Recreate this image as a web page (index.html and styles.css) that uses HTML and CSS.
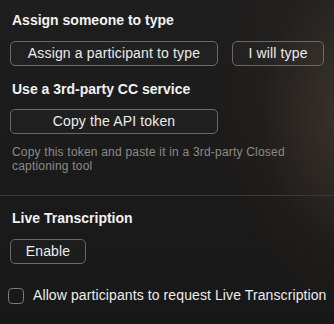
FILE: index.html
```html
<!DOCTYPE html>
<html>
<head>
<meta charset="utf-8">
<link rel="stylesheet" href="styles.css">
</head>
<body>
<div class="panel">
  <section class="sect">
    <h2 class="heading h-first">Assign someone to type</h2>
    <div class="btn-row">
      <button class="btn btn-wide">Assign a participant to type</button>
      <button class="btn btn-self">I will type</button>
    </div>
    <h2 class="heading h-second">Use a 3rd-party CC service</h2>
    <button class="btn btn-wide btn-block">Copy the API token</button>
    <p class="desc">Copy this token and paste it in a 3rd-party Closed captioning tool</p>
  </section>
  <div class="separator"></div>
  <section class="sect">
    <h2 class="heading h-third">Live Transcription</h2>
    <button class="btn btn-enable btn-block">Enable</button>
    <label class="check-row">
      <span class="checkbox"></span>
      <span class="check-label">Allow participants to request Live Transcription</span>
    </label>
  </section>
</div>
</body>
</html>
```
FILE: styles.css
```css
html, body {
  margin: 0;
  padding: 0;
}
body {
  width: 334px;
  height: 324px;
  overflow: hidden;
  background-color: #1b1a1a;
  background-image:
    radial-gradient(ellipse 150px 200px at 110% 35%, rgba(95, 78, 60, 0.55), rgba(60, 50, 40, 0.15) 70%, rgba(0, 0, 0, 0) 100%),
    linear-gradient(180deg, #1f1e1e 0%, #1b1a1a 60%, #181818 100%);
  font-family: "Liberation Sans", Arial, sans-serif;
  color: #ececec;
}
.panel {
  display: flex;
  flex-direction: column;
}
.sect {
  display: flex;
  flex-direction: column;
  align-items: flex-start;
  padding: 0 10px;
}
.heading {
  margin: 0 0 0 2px;
  font-size: 14px;
  line-height: 17px;
  font-weight: bold;
  color: #f2f2f2;
  white-space: nowrap;
}
.h-first { margin-top: 12px; margin-bottom: 12px; }
.h-second { margin-top: 15px; margin-bottom: 11px; }
.h-third { margin-top: 14px; margin-bottom: 12px; }
.btn-row {
  display: flex;
  gap: 14px;
}
.btn {
  box-sizing: border-box;
  flex-shrink: 0;
  height: 25px;
  padding: 0;
  border: 1px solid #6a6968;
  border-radius: 5px;
  background: rgba(255, 255, 255, 0.02);
  color: #ececec;
  font-family: "Liberation Sans", Arial, sans-serif;
  font-size: 14px;
  line-height: 17px;
  letter-spacing: 0.15px;
  white-space: nowrap;
  display: flex;
  align-items: center;
  justify-content: center;
}
.btn-wide { width: 208px; }
.btn-self { width: 92px; }
.btn-enable { width: 76px; }
.desc {
  margin: 11px 0 0 2px;
  font-size: 12px;
  line-height: 14px;
  letter-spacing: 0.2px;
  color: #8c8a88;
  width: 310px;
}
.separator {
  height: 1px;
  margin-top: 22px;
  background: #3b3937;
}
.check-row {
  display: flex;
  align-items: center;
  gap: 9px;
  margin: 23px 0 0 -2px;
}
.checkbox {
  box-sizing: border-box;
  width: 16px;
  height: 16px;
  border: 1px solid #7a7978;
  border-radius: 4px;
}
.check-label {
  font-size: 14px;
  line-height: 17px;
  letter-spacing: 0.1px;
  color: #ececec;
  white-space: nowrap;
}
```
